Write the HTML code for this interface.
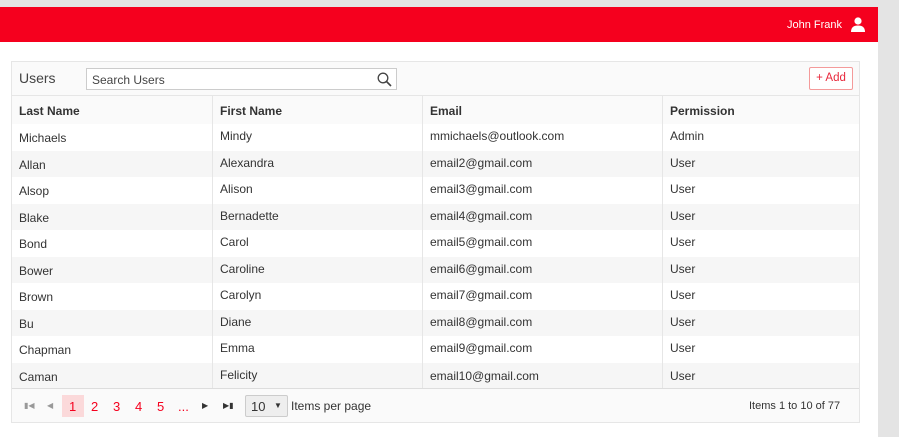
<!DOCTYPE html>
<html><head><style>
*{box-sizing:border-box;margin:0;padding:0}
body{width:899px;height:437px;background:#fff;font-family:"Liberation Sans",Arial,sans-serif;position:relative;overflow:hidden;color:#333}
.topgray{position:absolute;left:0;top:0;width:899px;height:7px;background:#e4e4e4}
.rgray{position:absolute;left:878px;top:0;width:21px;height:437px;background:#e4e4e4}
.hdr{position:absolute;left:0;top:7px;width:878px;height:35px;background:#f5001e}
.user{position:absolute;right:36px;top:12px;color:#fff;font-size:11px}
.card{position:absolute;left:11px;top:61px;width:849px;height:362px;border:1px solid #e6e6e6;background:#fafafa}
.tb{position:absolute;left:0;top:0;width:847px;height:34px;border-bottom:1px solid #e6e6e6}
.title{position:absolute;left:7px;top:8px;font-size:14px;color:#444}
.search{position:absolute;left:74px;top:6px;width:311px;height:22px;border:1px solid #ccc;background:#fff;font-size:12px;padding:4px 5px;color:#444}
.add{position:absolute;left:797px;top:5px;width:44px;height:23px;border:1px solid #f49a9a;border-radius:2px;color:#e8283c;font-size:11.5px;text-align:center;line-height:21px;background:#fff}
.row{position:absolute;left:0;width:847px;height:26.5px;font-size:12px}
.row div{position:absolute;top:0;height:100%;border-left:1px solid #e6e6e6;padding:5px 7px}
.row div:first-child{border-left:none}
.h{font-weight:bold;color:#333;background:#fafafa}
.h div{padding-top:8px!important}
.w{background:#fff}.g{background:#f6f6f6}
.c1{left:0;width:200px}.c2{left:200px;width:210px}.c3{left:410px;width:240px}.c4{left:650px;width:197px}
.pager{position:absolute;left:0;top:326px;width:847px;height:34px;border-top:1px solid #ddd;font-size:12px}
.pager span{position:absolute;top:10px}
.num{color:#f5001e;font-size:13px}
</style></head><body>
<div class="topgray"></div><div class="rgray"></div>
<div class="hdr"><div class="user">John Frank</div>
<svg style="position:absolute;left:851px;top:10px" width="14" height="15" viewBox="0 0 14 15"><circle cx="7" cy="4" r="3.6" fill="#fff"/><path d="M0 15 Q0 8.5 7 8.5 Q14 8.5 14 15Z" fill="#fff"/></svg></div>
<div class="card">
<div class="tb"><div class="title">Users</div><div class="search">Search Users
<svg style="position:absolute;right:4px;top:3px" width="15" height="15" viewBox="0 0 15 15"><circle cx="6" cy="6" r="4.8" fill="none" stroke="#444" stroke-width="1.3"/><path d="M9.5 9.5L14 14" stroke="#444" stroke-width="1.6"/></svg></div>
<div class="add">+ Add</div></div>
<div class="row h" style="top:34px;height:28px"><div class="c1">Last Name</div><div class="c2">First Name</div><div class="c3">Email</div><div class="c4">Permission</div></div>
<div class="row w" style="top:62px"><div class="c1" style="padding-top:7px">Michaels</div><div class="c2">Mindy</div><div class="c3">mmichaels@outlook.com</div><div class="c4">Admin</div></div>
<div class="row g" style="top:88.5px"><div class="c1" style="padding-top:7px">Allan</div><div class="c2">Alexandra</div><div class="c3">email2@gmail.com</div><div class="c4">User</div></div>
<div class="row w" style="top:115px"><div class="c1" style="padding-top:7px">Alsop</div><div class="c2">Alison</div><div class="c3">email3@gmail.com</div><div class="c4">User</div></div>
<div class="row g" style="top:141.5px"><div class="c1" style="padding-top:7px">Blake</div><div class="c2">Bernadette</div><div class="c3">email4@gmail.com</div><div class="c4">User</div></div>
<div class="row w" style="top:168px"><div class="c1" style="padding-top:7px">Bond</div><div class="c2">Carol</div><div class="c3">email5@gmail.com</div><div class="c4">User</div></div>
<div class="row g" style="top:194.5px"><div class="c1" style="padding-top:7px">Bower</div><div class="c2">Caroline</div><div class="c3">email6@gmail.com</div><div class="c4">User</div></div>
<div class="row w" style="top:221px"><div class="c1" style="padding-top:7px">Brown</div><div class="c2">Carolyn</div><div class="c3">email7@gmail.com</div><div class="c4">User</div></div>
<div class="row g" style="top:247.5px"><div class="c1" style="padding-top:7px">Bu</div><div class="c2">Diane</div><div class="c3">email8@gmail.com</div><div class="c4">User</div></div>
<div class="row w" style="top:274px"><div class="c1" style="padding-top:7px">Chapman</div><div class="c2">Emma</div><div class="c3">email9@gmail.com</div><div class="c4">User</div></div>
<div class="row g" style="top:300.5px;height:25.5px"><div class="c1" style="padding-top:7px">Caman</div><div class="c2">Felicity</div><div class="c3" style="padding-top:6px">email10@gmail.com</div><div class="c4" style="padding-top:6px">User</div></div>
<div class="pager">
<span style="left:12px;top:12px;font-size:8px;color:#999">&#9646;&#9664;</span>
<span style="left:35px;top:12px;font-size:8px;color:#999">&#9664;</span>
<div style="position:absolute;left:50px;top:6px;width:22px;height:22px;background:#fbd9da"></div>
<span class="num" style="left:57px">1</span><span class="num" style="left:79px">2</span><span class="num" style="left:101px">3</span><span class="num" style="left:123px">4</span><span class="num" style="left:145px">5</span><span class="num" style="left:166px">...</span>
<span style="left:190px;top:12px;font-size:8px;color:#333">&#9654;</span>
<span style="left:211px;top:12px;font-size:8px;color:#333">&#9654;&#9646;</span>
<div style="position:absolute;left:233px;top:6px;width:43px;height:22px;border:1px solid #ccc;background:#eee;border-radius:2px;font-size:13px;padding:3px 5px">10 <span style="position:absolute;left:28px;top:5px;font-size:8px">&#9660;</span></div>
<span style="left:279px">Items per page</span>
<span style="left:737px;font-size:11px;top:11px">Items 1 to 10 of 77</span>
</div>
</div>
</body></html>
